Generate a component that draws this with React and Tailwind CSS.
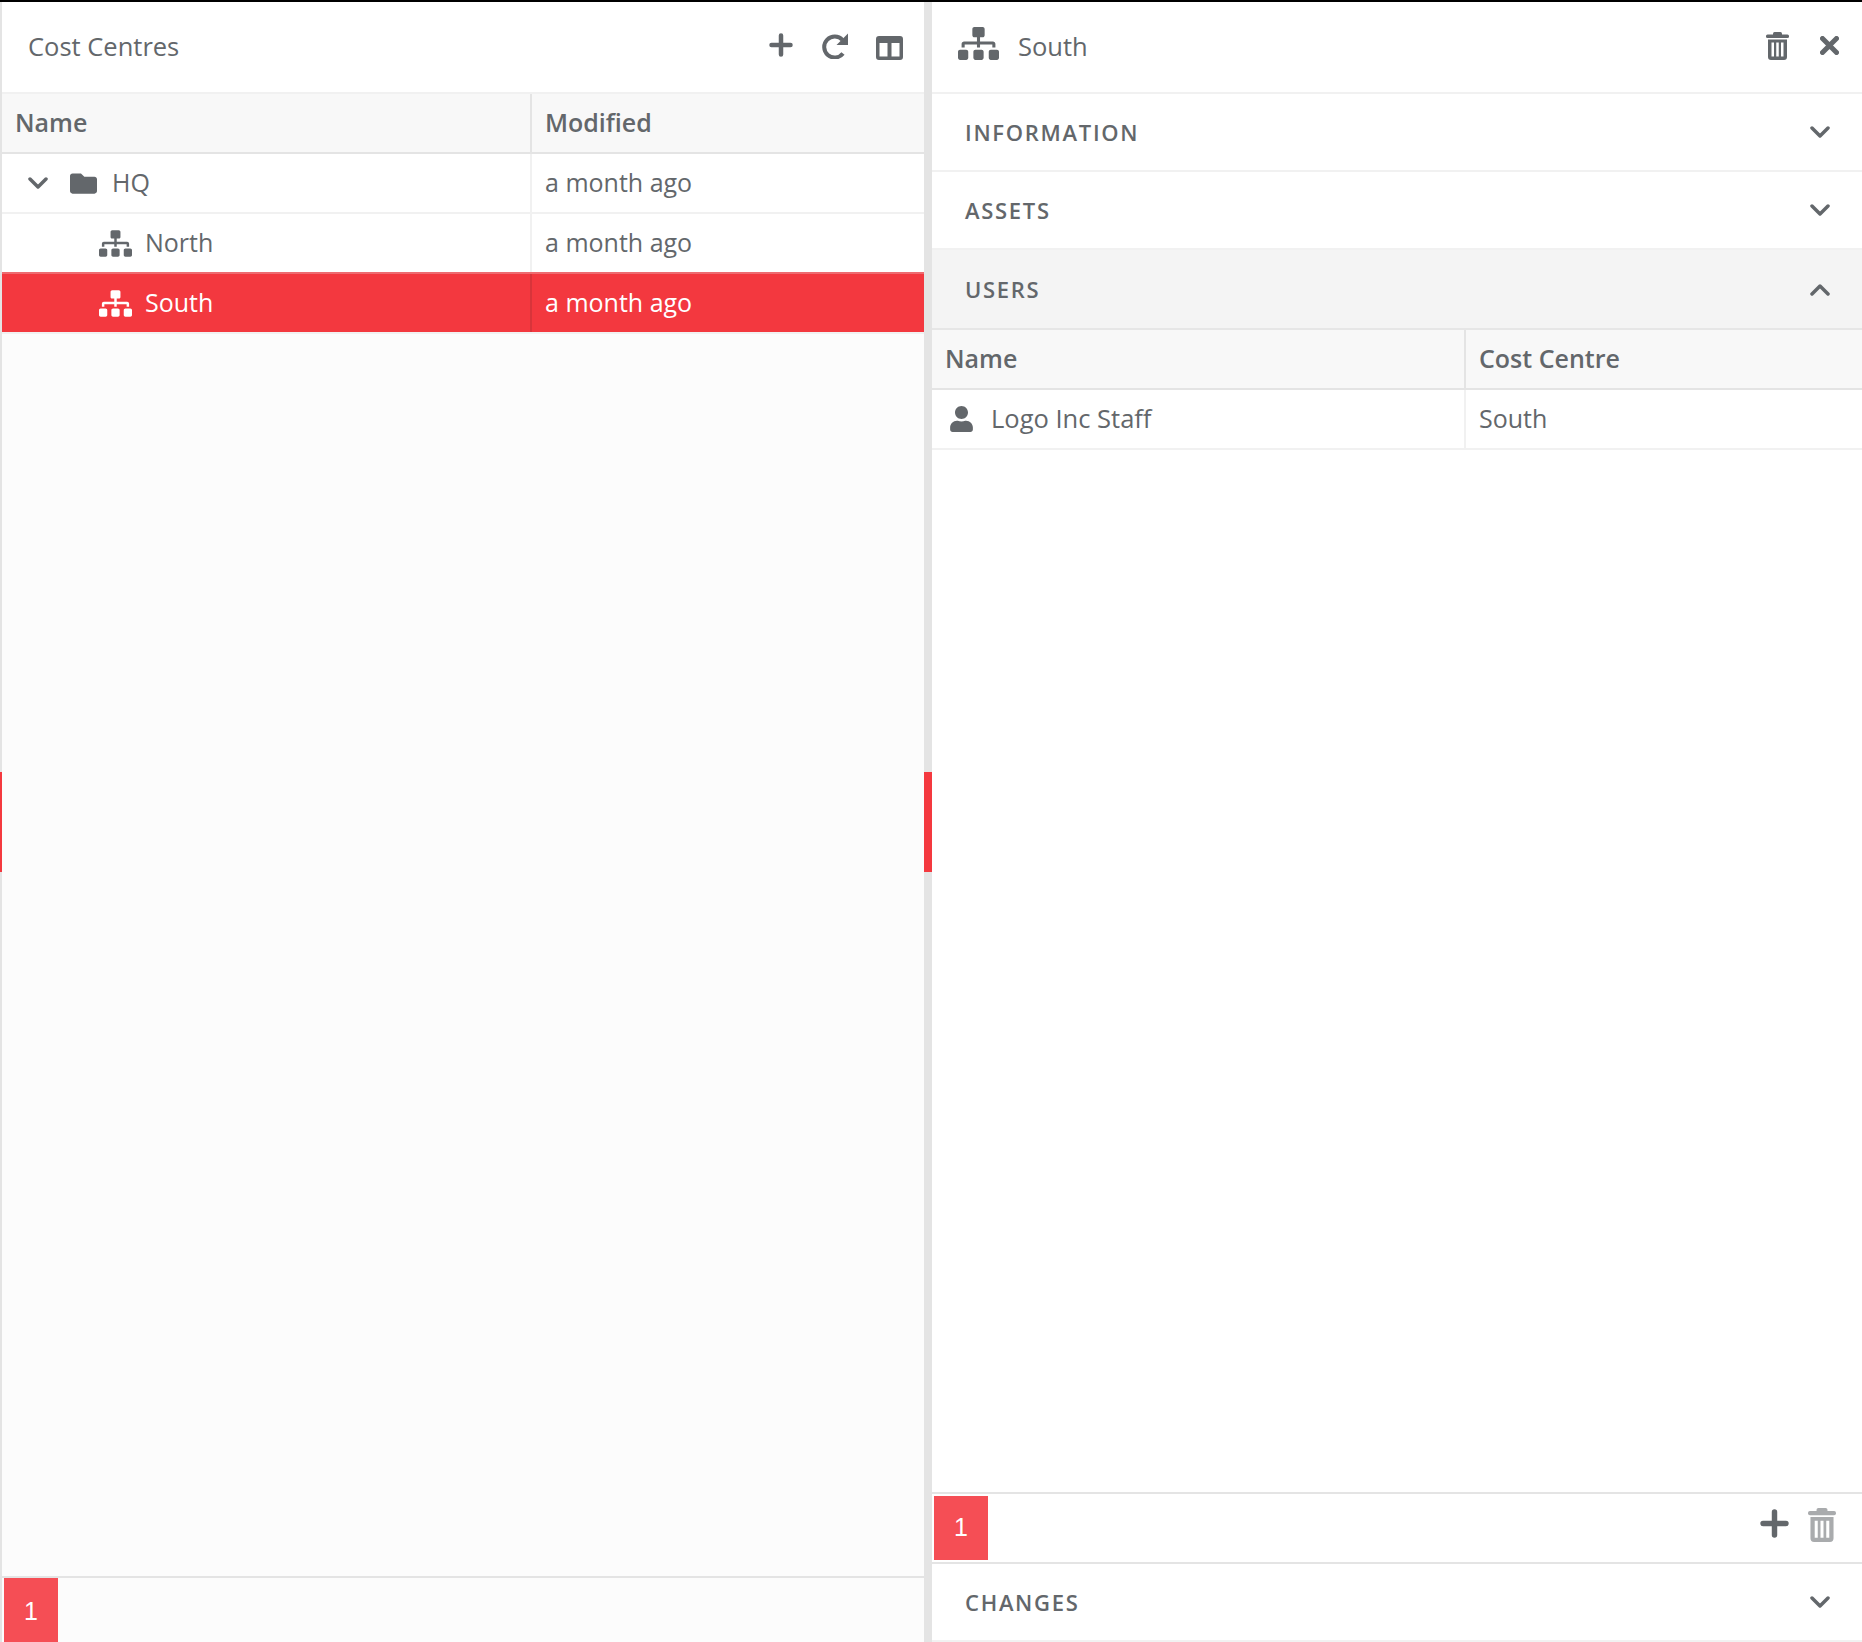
import { FaSitemap, FaFolder, FaUser } from 'react-icons/fa'

function Plus({ className }) {
  return (
    <svg viewBox="0 0 24 24" className={className} fill="none" stroke="currentColor" strokeWidth="4.500" strokeLinecap="round">
      <path d="M12 2.500v19M2.500 12h19" />
    </svg>
  )
}

function Redo({ className }) {
  return (
    <svg viewBox="0 0 27 26" className={className} fill="none">
      <path d="M22 20.500A10.500 10.500 0 1 1 21.500 7" stroke="currentColor" strokeWidth="4" />
      <path d="M27 0.500v11.500h-11.500z" fill="currentColor" />
    </svg>
  )
}

function Columns({ className }) {
  return (
    <svg viewBox="0 0 27 24" className={className} fill="currentColor">
      <path fillRule="evenodd" d="M3 0h21a3 3 0 0 1 3 3v18a3 3 0 0 1-3 3H3a3 3 0 0 1-3-3V3a3 3 0 0 1 3-3zM3.500 7v13.500h8V7zM15.500 7v13.500h8V7z" />
    </svg>
  )
}

function Trash({ className }) {
  return (
    <svg viewBox="0 0 23 28" className={className} fill="currentColor">
      <rect x="7" y="0" width="9" height="4" rx="1.500" />
      <rect x="0" y="2.500" width="23" height="3.500" rx="1.500" />
      <path fillRule="evenodd" d="M2 7.500h19v17.500a3 3 0 0 1-3 3H5a3 3 0 0 1-3-3zM5.500 10.500v14h2.500v-14zM10.250 10.500v14h2.500v-14zM15 10.500v14h2.500v-14z" />
    </svg>
  )
}

function Close({ className }) {
  return (
    <svg viewBox="0 0 19 19" className={className} fill="none" stroke="currentColor" strokeWidth="5" strokeLinecap="round">
      <path d="M2.500 2.500l14 14M16.500 2.500l-14 14" />
    </svg>
  )
}

function Chevron({ up, className }) {
  return (
    <svg viewBox="0 0 20 12" className={className} fill="none" stroke="currentColor" strokeWidth="3.500" strokeLinecap="round" strokeLinejoin="round">
      <path d={up ? 'M2 10l8-8 8 8' : 'M2 2l8 8 8-8'} />
    </svg>
  )
}

function Section({ title, open }) {
  return (
    <div className={`flex shrink-0 items-center justify-between border-b-2 pl-[33px] pr-[32px] ${open ? 'h-[80px] border-[#e6e6e6] bg-[#f4f4f4]' : 'h-[78px] border-[#f1f1f1]'}`}>
      <span className="text-[22px] font-semibold tracking-[1.700px]">{title}</span>
      <Chevron up={open} className={`h-[12px] w-[20px] ${open ? 'mt-[2px]' : ''}`} />
    </div>
  )
}

function HeadRow({ name, other, nameWidth }) {
  return (
    <div className="flex h-[60px] shrink-0 border-b-2 border-[#e4e4e4] bg-[#f8f8f8] text-[25px] font-semibold">
      <div className={`flex items-center border-r-2 border-[#e4e4e4] pl-[13px] ${nameWidth}`}>{name}</div>
      <div className="flex items-center pl-[13px]">{other}</div>
    </div>
  )
}

function Handle() {
  return (
    <div className="flex h-full flex-col bg-[#e4e4e4]">
      <div className="h-[770px]" />
      <div className="h-[100px] bg-[#f4393f]" />
    </div>
  )
}

export default function App() {
  return (
    <div className="flex h-[1642px] w-[1862px] flex-col overflow-hidden bg-white font-['Open_Sans',sans-serif] text-[#63676b]">
      <div className="h-[2px] shrink-0 bg-black" />
      <div className="flex min-h-0 flex-1">
        <div className="w-[2px] shrink-0">
          <Handle />
        </div>

        {/* Cost centre tree */}
        <div className="flex w-[922px] shrink-0 flex-col bg-[#fcfcfc]">
          <div className="flex h-[92px] shrink-0 items-center justify-between border-b-2 border-[#f1f1f1] bg-white pl-[26px] pr-[21px]">
            <span className="mb-[2px] text-[25.500px]">Cost Centres</span>
            <div className="flex items-center">
              <Plus className="mb-[4px] h-[24px] w-[24px]" />
              <Redo className="mb-[3px] ml-[28px] h-[26px] w-[27px]" />
              <Columns className="ml-[28px] mt-[2px] h-[24px] w-[27px]" />
            </div>
          </div>
          <HeadRow name="Name" other="Modified" nameWidth="w-[530px]" />
          <div className="flex h-[60px] shrink-0 border-b-2 border-[#f1f1f1] bg-white text-[25px]">
            <div className="flex w-[530px] items-center border-r-2 border-[#f1f1f1] pl-[26px]">
              <Chevron className="h-[12px] w-[20px]" />
              <FaFolder className="ml-[22px] h-[27px] w-[27px]" />
              <span className="ml-[15px]">HQ</span>
            </div>
            <div className="flex items-center pl-[13px]">a month ago</div>
          </div>
          <div className="flex h-[60px] shrink-0 border-b-2 border-[#ee6b70] bg-white text-[25px]">
            <div className="flex w-[530px] items-center border-r-2 border-[#f1f1f1] pl-[97px]">
              <FaSitemap className="h-[33px] w-[33px]" />
              <span className="ml-[13px]">North</span>
            </div>
            <div className="flex items-center pl-[13px]">a month ago</div>
          </div>
          <div className="flex h-[60px] shrink-0 border-b-2 border-[#f1f1f1] bg-[#f3383f] text-[25px] text-white">
            <div className="flex w-[530px] items-center border-r-2 border-[#d8343a] pl-[97px]">
              <FaSitemap className="h-[33px] w-[33px]" />
              <span className="ml-[13px]">South</span>
            </div>
            <div className="flex items-center pl-[13px]">a month ago</div>
          </div>
          <div className="flex-1" />
          <div className="flex h-[66px] shrink-0 border-t-2 border-[#e4e4e4] pl-[2px]">
            <div className="flex w-[54px] items-center justify-center bg-[#f54e55] pt-[3px] font-['Liberation_Sans',sans-serif] text-[25px] text-white">1</div>
          </div>
        </div>

        <div className="w-[8px] shrink-0">
          <Handle />
        </div>

        {/* Selected cost centre */}
        <div className="flex min-w-0 flex-1 flex-col">
          <div className="flex h-[92px] shrink-0 items-center justify-between border-b-2 border-[#f1f1f1] pl-[26px] pr-[23px]">
            <div className="flex items-center gap-[19px]">
              <FaSitemap className="mb-[7px] h-[41px] w-[41px]" />
              <span className="mb-[2px] text-[25.500px]">South</span>
            </div>
            <div className="flex items-center gap-[31px]">
              <Trash className="mb-[2px] h-[28px] w-[23px]" />
              <Close className="mb-[3px] h-[19px] w-[19px]" />
            </div>
          </div>
          <Section title="INFORMATION" />
          <Section title="ASSETS" />
          <Section title="USERS" open />
          <HeadRow name="Name" other="Cost Centre" nameWidth="w-[534px]" />
          <div className="flex h-[60px] shrink-0 border-b-2 border-[#f1f1f1] text-[25px]">
            <div className="flex w-[534px] items-center border-r-2 border-[#f1f1f1] pl-[18px]">
              <FaUser className="h-[26px] w-[23px]" />
              <span className="mb-[2px] ml-[18px] text-[25.500px]">Logo Inc Staff</span>
            </div>
            <div className="flex items-center pl-[13px]">South</div>
          </div>
          <div className="flex-1" />
          <div className="flex h-[72px] shrink-0 items-center justify-between border-y-2 border-[#e4e4e4] pl-[2px] pr-[26px]">
            <div className="flex h-[64px] w-[54px] items-center justify-center bg-[#f54e55] font-['Liberation_Sans',sans-serif] text-[25px] text-white">1</div>
            <div className="flex items-center gap-[19px]">
              <Plus className="mb-[9px] h-[29px] w-[29px]" />
              <Trash className="mb-[7px] h-[34px] w-[28px] text-[#a9abad]" />
            </div>
          </div>
          <Section title="CHANGES" />
        </div>
      </div>
    </div>
  )
}
